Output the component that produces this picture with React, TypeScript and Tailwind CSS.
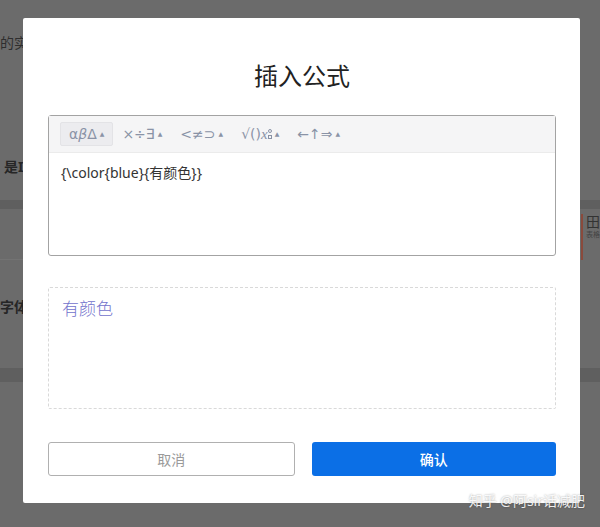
import React from "react";

const sans = { fontFamily: '"Noto Sans", "Noto Sans CJK SC", sans-serif' };

const Caret = () => (
  <span className="ml-[3px] inline-block text-[6px] leading-none text-[#8a93a6]">▲</span>
);

const Tool = ({ active, children }: { active?: boolean; children: React.ReactNode }) => (
  <div
    className={`flex h-[24px] items-center rounded-[2px] px-[8px] text-[14px] text-[#8a93a6] ${
      active ? "border border-[#e3e3e6] bg-[#ececef]" : "border border-transparent"
    }`}
    style={{ fontFamily: '"DejaVu Sans", "Noto Sans", sans-serif' }}
  >
    {children}
    <Caret />
  </div>
);

const Backdrop = () => (
  <div className="flex h-full w-full flex-col bg-[#6b6b6b] text-[#262626]" style={sans}>
    <div className="h-[4px] w-full" />
    <div className="mt-[30px] text-[14px] leading-[18px] text-[#2e2e2e]">的实</div>
    <div className="mt-[106px] pl-[4px] text-[14px] font-bold leading-[18px]">是I</div>
    <div className="mt-[24px] flex h-[9px] w-full bg-[#5f5f5f]" />
    <div className="flex h-[50px] w-full justify-end">
      <div className="mt-[5px] flex h-[46px] w-[19px] flex-col border-l-2 border-[#8a4a3c] pl-[3px]">
        <span className="text-[14px] leading-[16px] text-[#333]">田</span>
        <span className="text-[7px] leading-[10px] text-[#444]">表格</span>
      </div>
    </div>
    <div className="h-[1px] w-[23px] bg-[#737373]" />
    <div className="mt-[38px] text-[14px] font-bold leading-[18px]">字体</div>
    <div className="mt-[52px] h-[14px] w-full bg-[#5f5f5f]" />
  </div>
);

export default function App() {
  return (
    <div className="relative h-[527px] w-[600px] overflow-hidden">
      <Backdrop />

      <div
        className="absolute left-[23px] top-[18px] flex h-[485px] w-[557px] flex-col rounded-[2px] bg-white px-[25px] pr-[24px]"
        style={sans}
      >
        <h2
          className="pt-[40px] text-center text-[24px] leading-[34px] text-[#222]"
          style={{ fontFamily: '"Noto Sans CJK SC", sans-serif' }}
        >
          插入公式
        </h2>

        <div className="mt-[23px] flex h-[141px] flex-col rounded-[3px] border border-[#a3a3a3]">
          <div className="flex h-[37px] items-center border-b border-[#ebebeb] bg-[#f5f5f6] pl-[11px]">
            <Tool active>
              α<span className="italic">β</span>Δ
            </Tool>
            <Tool>×÷∃</Tool>
            <Tool>&lt;≠⊃</Tool>
            <Tool>
              √()
              <span className="italic text-[15px]" style={{ fontFamily: '"Liberation Serif", serif' }}>
                x
              </span>
              <span className="flex flex-col gap-[2px]">
                <span className="h-[4px] w-[4px] rounded-full border border-[#8a93a6]" />
                <span className="h-[4px] w-[4px] border border-[#8a93a6]" />
              </span>
            </Tool>
            <Tool>←↑⇒</Tool>
          </div>
          <div className="px-[12px] pt-[10px] text-[14px] leading-[20px] text-[#333]">
            {"{\\color{blue}{有颜色}}"}
          </div>
        </div>

        <div className="mt-[31px] h-[122px] rounded-[2px] border border-dashed border-[#d9d9d9] px-[13px] pt-[8px]">
          <span
            className="text-[17px] font-light leading-[24px] text-[#7272cc]"
            style={{ fontFamily: '"Noto Sans CJK SC", serif' }}
          >
            有颜色
          </span>
        </div>

        <div className="mt-[33px] flex gap-[17px]">
          <button className="h-[34px] flex-1 rounded-[3px] border border-[#b0b0b0] bg-white text-[14px] text-[#9a9a9a]">
            取消
          </button>
          <button className="h-[34px] flex-1 rounded-[3px] bg-[#0b6fe6] text-[14px] font-medium text-white">
            确认
          </button>
        </div>
      </div>

      <div
        className="absolute bottom-[17px] right-[15px] text-[14px] leading-[18px] text-white/90"
        style={{ ...sans, textShadow: "0 0 2px rgba(0,0,0,0.4)" }}
      >
        知乎 @阿sir话减肥
      </div>
    </div>
  );
}
